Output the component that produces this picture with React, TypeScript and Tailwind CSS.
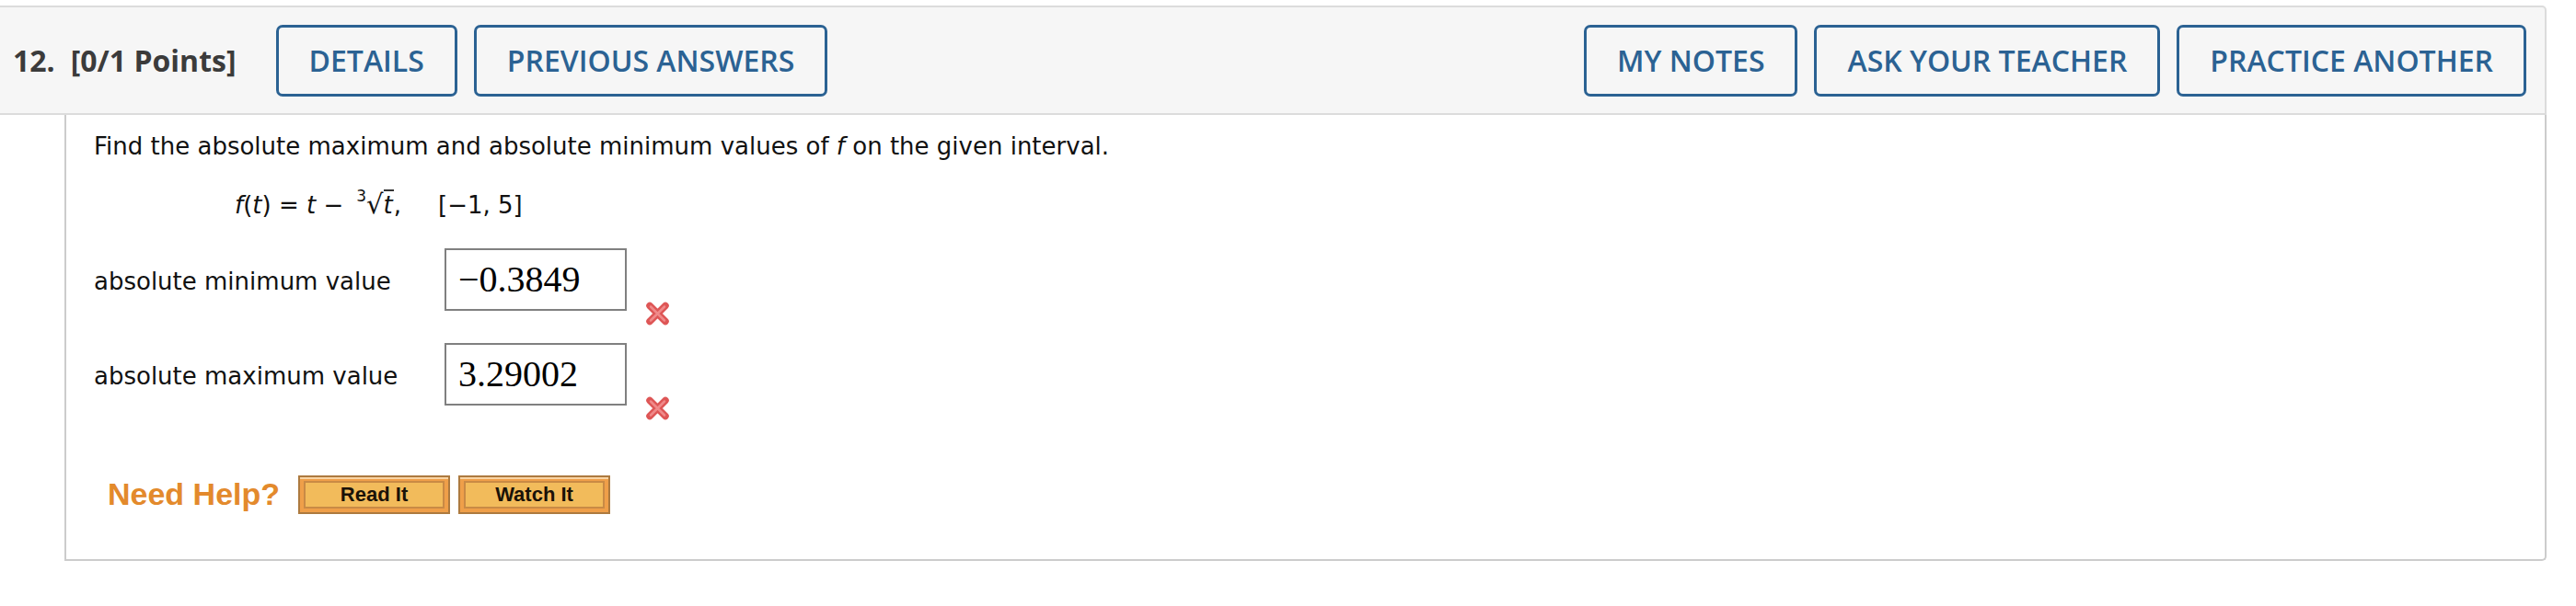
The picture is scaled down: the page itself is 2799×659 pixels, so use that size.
import React from 'react';

const HeaderButton = ({ label }: { label: string }) => (
  <button className="h-[78px] px-[33px] rounded-[7px] border-[3px] border-[#2b6293] bg-[#f6f6f6] text-[32px] font-semibold leading-none text-[#2b6293] whitespace-nowrap font-['Open_Sans',sans-serif]">
    {label}
  </button>
);

// red cross shown next to a wrong answer
const WrongMark = () => (
  <svg width="27" height="26" viewBox="0 0 27 26" className="shrink-0">
    <path d="M5 4.5 L22 21.5 M22 4.5 L5 21.5" stroke="#de5656" strokeWidth="7.5" strokeLinecap="round" />
    <path d="M6 5.5 L21 20.5 M21 5.5 L6 20.5" stroke="#f08a8a" strokeWidth="2.5" strokeLinecap="round" />
  </svg>
);

const HelpButton = ({ label }: { label: string }) => (
  <button className="w-[165px] h-[42px] border-2 border-[#ad7a3f] bg-[#ef9f49] p-[4px] shadow-[inset_0_2px_0_#f9d4a4]">
    <span className="flex h-full items-center justify-center border-2 border-[#c98a45] bg-[#f2bb5b] text-[22px] font-bold leading-none text-[#1a1208] font-['Liberation_Sans',Arial,sans-serif]">
      {label}
    </span>
  </button>
);

const AnswerRow = ({ label, value }: { label: string; value: string }) => (
  <div className="flex items-start">
    <div className="w-[381px] pt-[17px] leading-[39px]">{label}</div>
    <div className="w-[198px] h-[68px] border-2 border-[#808080] bg-white pl-[13px] text-[40px] leading-[64px] text-black font-['Liberation_Serif',serif]">
      {value}
    </div>
    <div className="ml-[20px] mt-[58px]">
      <WrongMark />
    </div>
  </div>
);

export default function App() {
  return (
    <div className="w-[2767px] pt-[6px] bg-white">
      {/* question header */}
      <div className="h-[119px] flex items-center justify-between border-t-2 border-b-2 border-r-2 border-[#dcdcdc] rounded-tr-[5px] bg-[#f6f6f6] pl-[14px] pr-[20px]">
        <div className="flex items-center">
          <div className="text-[32px] font-bold text-[#3b3b3b] font-['Open_Sans',sans-serif] whitespace-nowrap">
            <span>12.</span>
            <span className="ml-[17px]">[0/1 Points]</span>
          </div>
          <div className="ml-[43px] flex gap-[18px]">
            <HeaderButton label="DETAILS" />
            <HeaderButton label="PREVIOUS ANSWERS" />
          </div>
        </div>
        <div className="flex gap-[18px]">
          <HeaderButton label="MY NOTES" />
          <HeaderButton label="ASK YOUR TEACHER" />
          <HeaderButton label="PRACTICE ANOTHER" />
        </div>
      </div>

      {/* question body */}
      <div className="ml-[70px] border-l-2 border-r-2 border-b-2 border-[#cccccc] rounded-br-[5px] pl-[30px] pt-[15px] pb-[45px] text-[26px] text-[#111] font-['DejaVu_Sans',Verdana,sans-serif]">
        <p className="leading-[39px]">
          Find the absolute maximum and absolute minimum values of <i>f</i> on the given interval.
        </p>

        <div className="mt-[24px] ml-[153px] flex items-baseline leading-[39px] whitespace-pre">
          <span>
            <i>f</i>(<i>t</i>) = <i>t</i> − 
          </span>
          <span className="ml-[14px] relative -top-[13px] text-[17px] leading-none">3</span>
          <span className="text-[29px]">√</span>
          <span className="border-t-2 border-[#333] leading-[30px] italic pr-[1px]">t</span>
          <span>,</span>
          <span className="ml-[40px]">[−1, 5]</span>
        </div>

        <div className="mt-[27px] flex flex-col gap-[19px]">
          <AnswerRow label="absolute minimum value" value="−0.3849" />
          <AnswerRow label="absolute maximum value" value="3.29002" />
        </div>

        <div className="mt-[55px] ml-[15px] flex items-center">
          <span className="text-[34px] font-bold text-[#e38a2c] font-['Liberation_Sans',Arial,sans-serif]">
            Need Help?
          </span>
          <div className="ml-[20px] flex gap-[9px]">
            <HelpButton label="Read It" />
            <HelpButton label="Watch It" />
          </div>
        </div>
      </div>
    </div>
  );
}
